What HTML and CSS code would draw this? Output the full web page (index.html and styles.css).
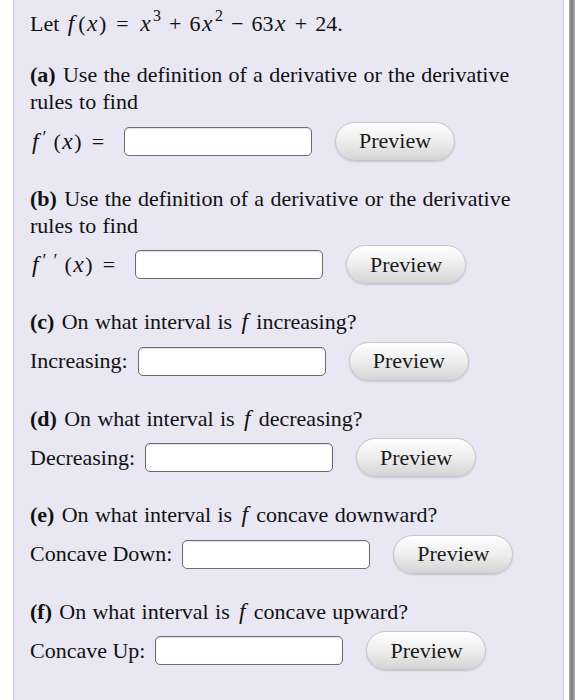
FILE: index.html
```html
<!DOCTYPE html>
<html lang="en">
<head>
    <meta charset="UTF-8">
    <meta name="viewport" content="width=device-width, initial-scale=1.0">
    <title>Derivative Problem</title>
    <link rel="stylesheet" href="styles.css">
</head>
<body>
    <div class="page">
        <div class="problem">
            <p class="intro">Let <span class="math"><i class="fn">f</i>(<i>x</i>)<span class="rel">=</span><i>x</i><sup>3</sup><span class="bin">+</span>6<i>x</i><sup>2</sup><span class="bin">−</span>63<i>x</i><span class="bin">+</span>24</span>.</p>

            <div class="part">
                <p class="question"><b>(a)</b> Use the definition of a derivative or the derivative rules to find</p>
                <div class="answer-row">
                    <span class="label math"><i class="fn">f</i><span class="prime">′</span>(<i>x</i>)<span class="rel">=</span></span>
                    <input type="text" class="answer">
                    <button class="preview">Preview</button>
                </div>
            </div>

            <div class="part">
                <p class="question"><b>(b)</b> Use the definition of a derivative or the derivative rules to find</p>
                <div class="answer-row">
                    <span class="label math"><i class="fn">f</i><span class="prime">′</span><span class="prime">′</span>(<i>x</i>)<span class="rel">=</span></span>
                    <input type="text" class="answer">
                    <button class="preview">Preview</button>
                </div>
            </div>

            <div class="part">
                <p class="question"><b>(c)</b> On what interval is <i class="fn inline">f</i> increasing?</p>
                <div class="answer-row">
                    <span class="label">Increasing:</span>
                    <input type="text" class="answer">
                    <button class="preview">Preview</button>
                </div>
            </div>

            <div class="part">
                <p class="question"><b>(d)</b> On what interval is <i class="fn inline">f</i> decreasing?</p>
                <div class="answer-row">
                    <span class="label">Decreasing:</span>
                    <input type="text" class="answer">
                    <button class="preview">Preview</button>
                </div>
            </div>

            <div class="part">
                <p class="question"><b>(e)</b> On what interval is <i class="fn inline">f</i> concave downward?</p>
                <div class="answer-row">
                    <span class="label">Concave Down:</span>
                    <input type="text" class="answer">
                    <button class="preview">Preview</button>
                </div>
            </div>

            <div class="part">
                <p class="question"><b>(f)</b> On what interval is <i class="fn inline">f</i> concave upward?</p>
                <div class="answer-row">
                    <span class="label">Concave Up:</span>
                    <input type="text" class="answer">
                    <button class="preview">Preview</button>
                </div>
            </div>
        </div>
        <div class="scrollbar"></div>
    </div>
</body>
</html>
```

FILE: styles.css
```css
* {
    box-sizing: border-box;
}

body {
    margin: 0;
    background-color: #fff;
    font-family: 'Liberation Serif', 'Times New Roman', serif;
    font-size: 22px;
    color: #111;
}

.page {
    display: flex;
    height: 700px;
    overflow: hidden;
}

.problem {
    margin-left: 13px;
    width: 551px;
    padding: 10px 16px 0 16px;
    background-color: #e9e7f3;
    border-left: 1px solid #cdc9e4;
    border-right: 1px solid #cdc9e4;
}

.scrollbar {
    margin-left: 5px;
    width: 6px;
    background: linear-gradient(to right, #b4b4b4, #7c7c7c 40%, #8c8c8c 70%, #bcbcbc);
}

p {
    margin: 0;
    line-height: 27px;
    word-spacing: 0.8px;
}

.question b {
    margin-right: 1px;
}

.intro {
    margin-bottom: 24px;
}

.part {
    margin-bottom: 23.5px;
}

/* math, spaced roughly like the TeX renderer */
.math {
    font-family: 'Liberation Serif', serif;
    font-size: 22px;
    white-space: nowrap;
}

.math i {
    font-family: 'Liberation Serif', serif;
    font-style: italic;
    font-size: 23.5px;
    padding: 0 1.5px;
}

.fn {
    font-family: 'Liberation Serif', serif;
    font-size: 23.5px;
    padding: 0 4px 0 2px !important;
}

.fn.inline {
    padding: 0 2px 0 3px !important;
}

.math sup {
    font-size: 16px;
    line-height: 0;
    vertical-align: 10px;
    margin-left: 1px;
}

.prime {
    display: inline-block;
    width: 11px;
    font-size: 18px;
    vertical-align: 5px;
    line-height: 0;
}

.rel {
    margin: 0 10px;
}

.bin {
    margin: 0 8px;
}

.answer-row {
    display: flex;
    align-items: center;
    height: 40px;
    margin-top: 6px;
}

.answer {
    margin-left: 10px;
    width: 188px;
    height: 29px;
    border: 1.5px solid #6b6b6b;
    border-radius: 5px;
    background-color: #fff;
    box-shadow: inset 0 1px 1px rgba(0, 0, 0, 0.12);
    font: inherit;
}

.preview {
    margin-left: 23px;
    width: 120px;
    height: 39px;
    border: 1px solid #c6c6c6;
    border-radius: 20px;
    background: linear-gradient(#ffffff, #ebebeb 55%, #d4d4d4);
    box-shadow: 0 1px 2px rgba(0, 0, 0, 0.15);
    font-family: inherit;
    font-size: 22px;
    color: #1a1a1a;
    padding: 0;
    cursor: pointer;
}
```
